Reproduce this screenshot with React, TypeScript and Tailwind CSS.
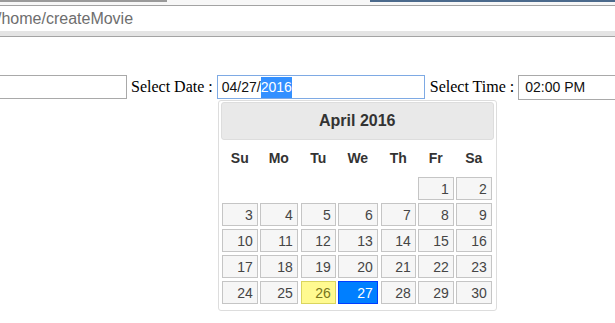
import React from 'react';

const colTracks = 'grid grid-cols-[38px_41px_37px_43px_37px_38px_36px]';
const cellWidths = ['w-[36px]', 'w-[38px]', 'w-[35px]', 'w-[40px]', 'w-[35px]', 'w-[36px]', 'w-[36px]'];
const weekdays = ['Su', 'Mo', 'Tu', 'We', 'Th', 'Fr', 'Sa'];

// April 2016 starts on a Friday
const weeks: (number | null)[][] = [
  [null, null, null, null, null, 1, 2],
  [3, 4, 5, 6, 7, 8, 9],
  [10, 11, 12, 13, 14, 15, 16],
  [17, 18, 19, 20, 21, 22, 23],
  [24, 25, 26, 27, 28, 29, 30],
];

function DayCell({ day, col }: { day: number | null; col: number }) {
  if (day === null) return <div />;
  let tone = 'bg-[#f6f6f6] border-[#c5c5c5] text-[#454545]';
  if (day === 26) tone = 'bg-[#fffa90] border-[#dad55e] text-[#777620]';
  if (day === 27) tone = 'bg-[#007fff] border-[#003eff] text-white';
  return (
    <div className={`${cellWidths[col]} h-[23px] border ${tone} flex items-center justify-end pr-[4px] text-[14px] leading-none`}>
      {day}
    </div>
  );
}

function DatePicker() {
  return (
    <div className="absolute left-[1px] top-[25px] w-[279px] h-[211px] bg-white border border-[#dddddd] rounded-[3px] px-[2px] pt-[1px] font-['Liberation_Sans',Arial,sans-serif]">
      {/* Header */}
      <div className="h-[38px] bg-[#e9e9e9] border border-[#dddddd] rounded-[3px] flex items-center justify-center text-[16px] font-bold text-[#333333]">
        April 2016
      </div>

      <div className="ml-[1px]">
        {/* Weekday names */}
        <div className={`${colTracks} h-[36px] items-center`}>
          {weekdays.map((d, i) => (
            <div key={d} className={`${cellWidths[i]} text-center text-[14px] font-bold text-[#333333]`}>
              {d}
            </div>
          ))}
        </div>

        {/* Days */}
        <div className="flex flex-col gap-[3px] pt-[1px]">
          {weeks.map((week, r) => (
            <div key={r} className={colTracks}>
              {week.map((day, c) => (
                <DayCell key={c} day={day} col={c} />
              ))}
            </div>
          ))}
        </div>
      </div>
    </div>
  );
}

export default function App() {
  return (
    <div className="w-[615px] h-[323px] overflow-hidden bg-white relative">
      {/* Browser chrome */}
      <div className="h-[5px] flex items-start bg-[#f7f7f7]">
        <div className="w-[167px] h-[2px] bg-[#9a9a9a]" />
        <div className="flex-1" />
        <div className="w-[245px] h-[2px] bg-[#4b6a8c]" />
      </div>
      <div className="h-[1px] bg-[#a3a3a3]" />
      <div className="h-[25px] bg-white flex items-center -ml-[3px] font-['Liberation_Sans',Arial,sans-serif] text-[16px] text-[#6e6e6e]">
        /home/createMovie
      </div>
      <div className="h-[6px] bg-[#e4e4e4] border-b border-[#a3a3a3]" />

      {/* Form row */}
      <div className="mt-[38px] flex items-center h-[24px] font-['Liberation_Serif','Times_New_Roman',serif] text-[16px] text-black whitespace-nowrap">
        <div className="-ml-[10px] w-[137px] h-[24px] border border-[#a9a9a9] bg-white shrink-0" />
        <span className="ml-[4px]">Select Date :</span>
        <div className="relative ml-[4px] shrink-0">
          <div className="w-[208px] h-[24px] border border-[#7eaae4] bg-white flex items-center pl-[4px] font-['Liberation_Sans',Arial,sans-serif] text-[14px] text-[#111111]">
            04/27/<span className="bg-[#3390ff] text-white">2016</span>
          </div>
          <DatePicker />
        </div>
        <span className="ml-[5px]">Select Time :</span>
        <div className="ml-[4px] w-[120px] h-[25px] border border-[#a9a9a9] bg-white flex items-center pl-[6px] font-['Liberation_Sans',Arial,sans-serif] text-[14px] text-[#111111] shrink-0">
          02:00 PM
        </div>
      </div>
    </div>
  );
}
